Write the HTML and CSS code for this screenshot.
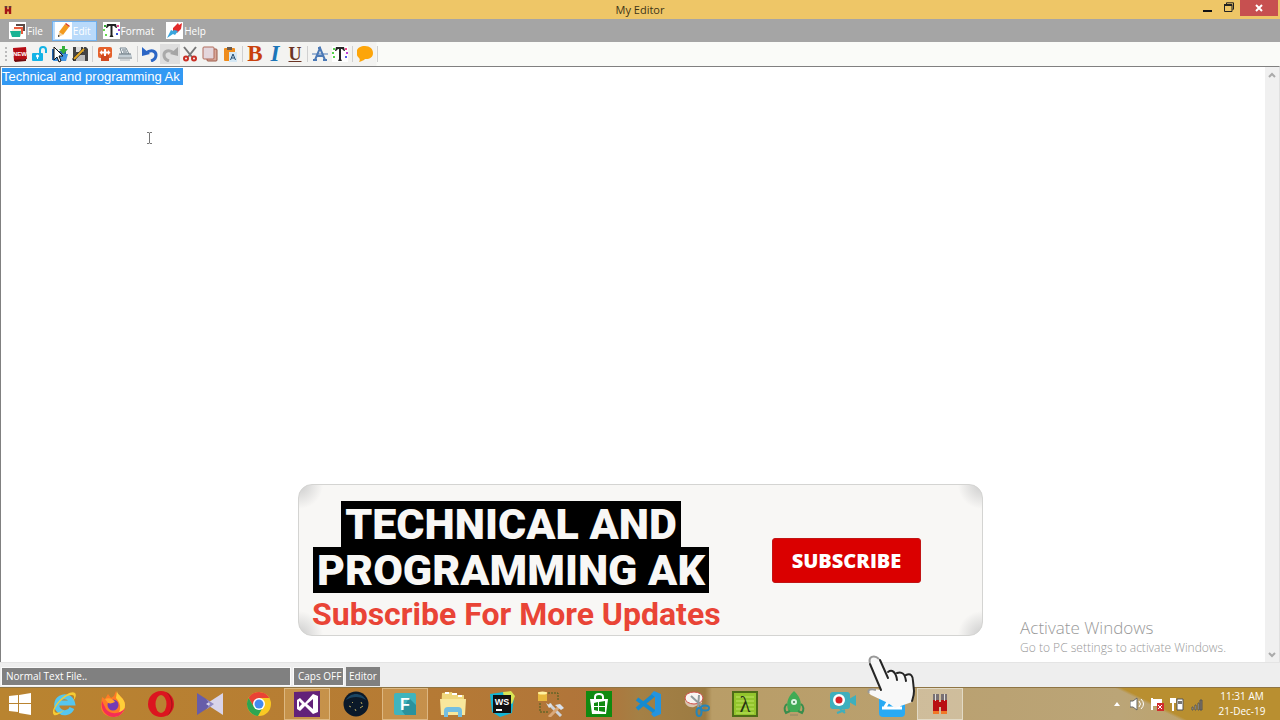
FILE: index.html
```html
<!DOCTYPE html>
<html lang="en">
<head>
  <meta charset="UTF-8" />
  <meta name="viewport" content="width=device-width, initial-scale=1.0"/>
  <title>My Editor</title>
  <link rel="stylesheet" href="styles.css">
</head>
<body>

  <header class="titlebar">
    <svg class="app-icon" viewBox="0 0 10 12"><path d="M1 1h3v4h2V1h3v10H6V8H4v3H1z" fill="#a31515"/><path d="M1 1h3v2H1zM6 1h3v2H6z" fill="#5a4040"/></svg>
    <h1>My Editor</h1>
    <div class="window-buttons">
      <button class="win-btn" aria-label="Minimize"><svg viewBox="0 0 10 10"><path d="M1 8h9v2H1z" fill="#111"/></svg></button>
      <button class="win-btn" aria-label="Restore"><svg viewBox="0 0 10 10"><path d="M2.500 2V.8h7v6.500H8.500" fill="none" stroke="#222"/><path d="M.5 2.500h7.500v7H.5z" fill="none" stroke="#222"/><path d="M0 2h8v2H0z" fill="#222"/></svg></button>
      <button class="win-btn close" aria-label="Close"><svg viewBox="0 0 10 10"><path d="M2 2l6 6M8 2L2 8" stroke="#fff" stroke-width="2"/></svg></button>
    </div>
  </header>

  <nav class="menubar">
    <button class="menu file">
      <svg viewBox="0 0 17 17"><path fill="#fff" d="M0 0h17v17H0z"/><path d="M7 2h9v7H7z" fill="#5b4b48"/><path d="M5 4h9v7H5z" fill="#fff"/><path d="M5 5h9v7H5z" fill="#e95b3c"/><path d="M3 7h9v7H3z" fill="#f7efdc"/><path d="M1 9h11l-1 6H3z" fill="#19b394"/></svg>
      File
    </button>
    <button class="menu edit active">
      <svg viewBox="0 0 17 17"><path fill="#fff" d="M0 0h17v17H0z"/><path d="M4 10l6-8 4 3-6 8z" fill="#f39a1e"/><path d="M10 2l1-1 4 3-1 1z" fill="#d83c26"/><path d="M4 10l4 3-5 2z" fill="#f2cf9c"/><path d="M3 13l2 1-2 1z" fill="#222"/></svg>
      Edit
    </button>
    <button class="menu format">
      <svg viewBox="0 0 17 17"><path fill="#fff" d="M0 0h17v17H0z"/><path d="M4 2h9l1 4h-1l-2-2h-1.500v9l1 2H6.500l1-2V4H6L4 6H3z" fill="#222"/><path d="M1 3h2v2H1z" fill="#3a3"/><path d="M0 7h2v2H0zM2 12h2v2H2z" fill="#63d94d"/><path d="M14 3h2v2h-2z" fill="#f0468a"/><path d="M15 7h2v2h-2z" fill="#a241d8"/><path d="M13 11h2v2h-2z" fill="#3755d6"/></svg>
      Format
    </button>
    <button class="menu help">
      <svg viewBox="0 0 17 17"><path fill="#fff" d="M0 0h17v17H0z"/><path d="M7 6l5-5 1 2 3-2-1 6-4 4-2-2-2 1z" fill="#e22b2b"/><path d="M1 16l4-8 2 1 1-1 4 1-3 4-2-1z" fill="#3aa5dd"/></svg>
      Help
    </button>
  </nav>

  <div class="toolbar">
    <span class="grip"></span>
    <button class="tool" aria-label="New"><svg viewBox="0 0 16 16"><path d="M1 2l13-1 1 12-13 2z" fill="#b50d14"/><path d="M2 14l12-1v2l-11 1z" fill="#6d0a0d"/><text x="8" y="10" class="new-label">NEW</text></svg></button>
    <button class="tool" aria-label="Unlock"><svg viewBox="0 0 16 16"><path d="M8 7V4a3 3 0 016 0v3" fill="none" stroke="#14b3e6" stroke-width="2"/><rect y="7" width="11" height="8" rx="1" fill="#14b3e6"/><circle cx="5.500" cy="10" r="1.500" fill="#fff"/><path d="M5 10h1v3H5z" fill="#fff"/></svg></button>
    <button class="tool" aria-label="Open"><svg viewBox="0 0 16 16"><path d="M0 3h5l1 2h8v9H0z" fill="#2563ac"/><path d="M3 8h13l-2 7H1z" fill="#4495e3"/><path d="M10 0h3v3h3l-4.500 5L7 3h3z" fill="#34af3a"/></svg></button>
    <button class="tool" aria-label="Save"><svg viewBox="0 0 16 16"><path d="M1 1h13l2 2v12H1z" fill="#444"/><path d="M4 1h8v5H4z" fill="#ddd"/><path d="M4 9h9v6H4z" fill="#bbb"/><path d="M9 1h2v4H9z" fill="#444"/><path d="M1 14L12 3" stroke="#222" stroke-width="3"/><path d="M2 13L12 3" stroke="#e5a823" stroke-width="2"/></svg></button>
    <span class="separator"></span>
    <button class="tool" aria-label="Page setup"><svg viewBox="0 0 16 16"><rect x="1" y="1" width="14" height="11" rx="2" fill="#e5622c"/><path d="M4 9h8v6H4z" fill="#d04a20"/><path d="M8 3v7M4 6.500h8" stroke="#fff" stroke-width="2"/><path d="M5 4L2.500 6.500 5 9M11 4l2.500 2.500L11 9" fill="#fff"/></svg></button>
    <button class="tool" aria-label="Print"><svg viewBox="0 0 16 16"><path d="M3 2h6l3 6H5z" fill="#eef3f6" stroke="#7c8b95"/><path d="M2 8h12l1 3H1z" fill="#c3ced5"/><path d="M2 8h12M1 12h14M5 4h4M6 6h4" stroke="#66757e"/><path d="M3 14h10" stroke="#acb4ba"/></svg></button>
    <span class="separator"></span>
    <button class="tool" aria-label="Undo"><svg viewBox="0 0 16 16"><path d="M4 7c5-4 10-2 10 2 0 3-2 5-5 6" fill="none" stroke="#2c66c5" stroke-width="3"/><path d="M0 1l8 7-8 2z" fill="#2c66c5"/></svg></button>
    <button class="tool redo" aria-label="Redo" disabled><svg viewBox="0 0 16 16"><path d="M12 7c-5-4-10-2-10 2 0 3 2 5 5 6" fill="none" stroke="#aaa" stroke-width="3"/><path d="M16 1L8 8l8 2z" fill="#a5a5a5"/></svg></button>
    <button class="tool" aria-label="Cut"><svg viewBox="0 0 16 16"><path d="M2 1l8 10M14 1L6 11" stroke="#777" stroke-width="2"/><circle cx="4" cy="12.500" r="2" fill="none" stroke="#c92f25" stroke-width="2"/><circle cx="12" cy="12.500" r="2" fill="none" stroke="#c92f25" stroke-width="2"/></svg></button>
    <button class="tool" aria-label="Copy"><svg viewBox="0 0 16 16"><rect x="5" y="3" width="10" height="12" rx="1" fill="#d8a89a" stroke="#9d5a49"/><rect x="1" y="1" width="11" height="12" rx="1" fill="#e4d6dc" stroke="#b16b5a"/></svg></button>
    <button class="tool" aria-label="Paste"><svg viewBox="0 0 16 16"><rect x="2" y="2" width="11" height="13" rx="1" fill="#ef8c1c"/><path d="M5 1h5v3H5z" fill="#6b5b4e"/><path d="M7 6h8v10H7z" fill="#d5e8f5"/><path d="M8.500 14l2.500-6 2.500 6M9.500 12h3" fill="none" stroke="#234b70"/></svg></button>
    <span class="separator"></span>
    <button class="tool bold" aria-label="Bold">B</button>
    <button class="tool italic" aria-label="Italic">I</button>
    <button class="tool underline" aria-label="Underline">U</button>
    <span class="separator"></span>
    <button class="tool" aria-label="Strikethrough"><svg viewBox="0 0 16 16"><path d="M3 14L8 2l5 12M5 10h6M1 14h4M11 14h4M6 2h3" fill="none" stroke="#4b79b6" stroke-width="2"/><path d="M0 8h16" stroke="#4b79b6"/></svg></button>
    <button class="tool" aria-label="Font"><svg viewBox="0 0 16 16"><path fill="#fff" d="M0 0h16v16H0z"/><path d="M4 1h8l1 4h-1l-2-2H9v10l1 2H6l1-2V3H6L4 5H3z" fill="#252525"/><path d="M1 2h2v2H1zM0 6h2v2H0zM1 10h2v2H1z" fill="#52d148"/><path d="M13 2h2v2h-2z" fill="#f0468a"/><path d="M14 6h2v2h-2z" fill="#c241d8"/><path d="M13 10h2v2h-2z" fill="#555ee6"/></svg></button>
    <span class="separator"></span>
    <button class="tool" aria-label="Comment"><svg viewBox="0 0 16 16"><path d="M8 0c5 0 8 3 8 7s-3 6-7 6c-2 0-2 2-7 3 1-2 1-3 0-4-4-3-4-12 6-12z" fill="#fda509"/></svg></button>
    <span class="separator last"></span>
  </div>

  <main class="editor">
    <textarea id="text" aria-label="Document text" spellcheck="false">Technical and programming Ak </textarea>
    <div class="scrollbar">
      <button aria-label="Scroll up"><svg viewBox="0 0 8 8"><path d="M1 6l3-3 3 3" fill="none" stroke="#aaa" stroke-width="2"/></svg></button>
      <button aria-label="Scroll down"><svg viewBox="0 0 8 8"><path d="M1 2l3 3 3-3" fill="none" stroke="#aaa" stroke-width="2"/></svg></button>
    </div>
  </main>

  <footer class="statusbar">
    <span class="status message">Normal Text File..</span>
    <span class="status caps">Caps OFF</span>
    <span class="status mode">Editor</span>
  </footer>

  <div class="taskbar">
    <button class="start" aria-label="Start"><svg viewBox="0 0 22 22"><path d="M0 3l9-1v8H0zM10 2l12-2v10H10zM0 11h9v8l-9-1zM10 11h12v11l-12-2z" fill="#fff"/></svg></button>
    <div class="apps">
      <button class="app" aria-label="Internet Explorer"><svg viewBox="0 0 26 26"><path d="M21 17a8 8 0 11.500-5H8" fill="none" stroke="#55c6ef" stroke-width="5"/><path d="M3 24C-3 18 18-3 24 2c2 2 0 6-2 8 2-4 1-6-1-6C14 3 1 18 4 21c2 2 6 0 9-2-3 3-7 6-10 5z" fill="#f6cb32"/></svg></button>
      <button class="app" aria-label="Firefox"><svg viewBox="0 0 26 26"><path d="M2 6l3 2 3-5 3 4 3-2 2-5c1 4 8 6 9 13 1 8-5 13-12 13S0 21 1 14z" fill="#ff7a25"/><path d="M17 0c0 4 8 7 8 14 0 8-6 12-12 12 9-3 9-13 3-19z" fill="#ffce38"/><path d="M2 10c-2 10 5 16 12 16 6 0 10-5 11-9-5 7-17 7-20-1z" fill="#f52e56"/><circle cx="13" cy="14" r="5.500" fill="#743bb5"/><path d="M5 8c5-2 9 1 10 3-3 1-4 2-7 1z" fill="#ffa52c"/></svg></button>
      <button class="app" aria-label="Opera"><svg viewBox="0 0 26 26"><circle cx="13" cy="13" r="13" fill="#dc151f"/><path d="M18 1c7 3 10 17 1 24 6-6 6-18-1-24z" fill="#a9101a"/><ellipse cx="13" cy="13" rx="5.500" ry="9" fill="#b98332"/></svg></button>
      <button class="app" aria-label="KMPlayer"><svg viewBox="0 0 26 26"><path d="M0 2l17 11L0 24z" fill="#675da9"/><path d="M26 2v22L9 13z" fill="#d9d4e9"/><path d="M9 8l8 5-8 6 4-6z" fill="#928ac2"/></svg></button>
      <button class="app" aria-label="Chrome"><svg viewBox="0 0 26 26"><circle cx="13" cy="13" r="12" fill="#f9c923"/><path d="M2.600 7A12 12 0 0123.400 7H13L8 16z" fill="#e94335"/><path d="M2.600 7A12 12 0 0012 25l5-9-9 0z" fill="#2da552"/><circle cx="13" cy="13" r="6" fill="#fff"/><circle cx="13" cy="13" r="4.500" fill="#438af0"/></svg></button>
      <button class="app open" aria-label="Visual Studio"><svg viewBox="0 0 26 26"><path d="M0 1l26-1v26H0z" fill="#632279"/><path d="M3 9l3-2 5 5 8-9 5 2v16l-5 2-8-8-5 5-3-2z" fill="#fff"/><path d="M5 10v6l3-3zM19 8v10l-6-5z" fill="#632279"/></svg></button>
      <button class="app" aria-label="Eclipse"><svg viewBox="0 0 26 26"><circle cx="13" cy="13" r="12.500" fill="#0b1929"/><path d="M3 9c4-8 16-8 20 0-6-4-14-4-20 0z" fill="#1b4562"/><path d="M6 15l2 1M12 18l1 2M17 17l3-2M18 11l1 2M9 11l1 1" stroke="#b6a55d"/></svg></button>
      <button class="app open" aria-label="Filmora"><svg viewBox="0 0 26 26"><rect x="2" y="2" width="22" height="22" rx="2" fill="#40b4bd"/><path d="M17 7l7 7v10H13l-3-4z" fill="#2a929d"/><text x="13" y="19" class="f-label">F</text></svg></button>
      <button class="app" aria-label="File Explorer"><svg viewBox="0 0 26 26"><path d="M2 2l10-1 1 3h11v20H1z" fill="#f0d77c"/><path d="M5 2h4M12 3h5M18 5h4" stroke="#fff" stroke-width="2"/><path d="M0 8h26l-1 16H1z" fill="#f8e79c"/><path d="M4 26v-6q0-4 4-4h10q4 0 4 4v6h-4v-5H8v5z" fill="#74bfe1"/></svg></button>
      <button class="app" aria-label="WebStorm"><svg viewBox="0 0 26 26"><path d="M1 3l14-2 10 6-2 15-12 4-8-5z" fill="#14b5d4"/><path d="M14 1l8-1 4 5-3 8-8-6z" fill="#d9e554"/><path d="M4 4h18v18H4z" fill="#111"/><text x="13" y="14" class="ws-label">WS</text><path d="M7 18h6v2H7z" fill="#fff"/></svg></button>
      <button class="app" aria-label="SQL tools"><svg viewBox="0 0 26 26"><path d="M10 2h10v8M2 12v9h9" fill="none" stroke="#425e20" stroke-dasharray="2 1"/><path d="M0 1h9v9H0z" fill="#e8b83d"/><ellipse cx="4.500" cy="2" rx="4.500" ry="1.500" fill="#fff2a0"/><path d="M11 13l12 12" stroke="#cdd3d9" stroke-width="3"/><path d="M22 15L11 26" stroke="#d9a878" stroke-width="3"/><path d="M17 14l5-1 4 4-3 2z" fill="#d8e1ed"/><path d="M8 12l3 2 2-2 1 3-3 2z" fill="#dce3e9"/></svg></button>
      <button class="app" aria-label="Store"><svg viewBox="0 0 26 26"><path d="M0 0h26v26H0z" fill="#118a10"/><path d="M4 8h18l-2 15H6z" fill="#fff"/><path d="M9 9V6q0-3 4-3t4 3v3" fill="none" stroke="#fff" stroke-width="2"/><path d="M8 12l4-1v4H8zM13 11l6-1v5h-6zM8 16h4v4l-4-1zM13 16h6v5l-6-1z" fill="#118a10"/></svg></button>
      <button class="app" aria-label="Visual Studio Code"><svg viewBox="0 0 26 26"><path d="M2 8L21 22M2 18L20 3" stroke="#168bd0" stroke-width="4"/><path d="M19 0l7 3v20l-7 3-3-3 4-3V6l-4-3z" fill="#2494df"/></svg></button>
      <button class="app" aria-label="Snipping Tool"><svg viewBox="0 0 26 26"><path d="M1 8c-1 6 4 9 9 8l8-4V8z" fill="#d9c3ae"/><ellipse cx="10" cy="7" rx="9" ry="6" fill="#f8f5f2" stroke="#d04c48"/><path d="M7 5l12 11M15 4l-1 13" stroke="#929b9e" stroke-width="2"/><ellipse cx="15" cy="21" rx="2.500" ry="4" fill="none" stroke="#2585b9" stroke-width="2"/><ellipse cx="21" cy="17" rx="4" ry="2.500" fill="none" stroke="#2585b9" stroke-width="2"/></svg></button>
      <button class="app" aria-label="Lambda"><svg viewBox="0 0 26 26"><path d="M1 1h24v24H1z" fill="#93c52d" stroke="#4e6c17" stroke-width="2"/><path d="M4 6h18M4 10h18M4 14h18M4 18h18M4 22h18" stroke="#bee360"/><text x="13" y="21" class="lambda-label">λ</text></svg></button>
      <button class="app" aria-label="Rocket"><svg viewBox="0 0 26 26"><path d="M13 0c8 7 8 15 5 21H8C5 15 5 7 13 0z" fill="#40ab55"/><path d="M6 13c-3 2-3 6-1 9l4-2M20 13c3 2 3 6 1 9l-4-2" fill="none" stroke="#388d4c" stroke-width="2"/><circle cx="13" cy="11" r="3" fill="#d9f3e0"/><circle cx="13" cy="11" r="1" fill="#38794b"/><path d="M9 24h8" stroke="#8f8465"/></svg></button>
      <button class="app" aria-label="Screen recorder"><svg viewBox="0 0 26 26"><rect y="1" width="20" height="17" rx="3" fill="#3eafbd"/><path d="M19 8l7-4v11l-7-4z" fill="#3eafbd"/><path d="M10 18l5 4M7 22l8-3" fill="none" stroke="#3eafbd" stroke-width="2"/><circle cx="9" cy="9" r="6" fill="#fff"/><circle cx="9" cy="9" r="3.500" fill="#d61f26"/></svg></button>
      <button class="app" aria-label="App Store"><svg viewBox="0 0 26 26"><rect width="26" height="26" rx="4" fill="#29aaf3"/><path d="M3 17h20M6 16l6-10M20 16L14 6" stroke="#fff" stroke-width="3"/></svg></button>
      <button class="app open current" aria-label="My Editor"><svg viewBox="0 0 26 26"><path d="M6 3h6v8h2V3h6v20h-6v-7h-2v7H6z" fill="#b90f12"/><path d="M6 3h6v6H6zM14 3h6v6h-6z" fill="#797073"/><path d="M8 3h1v7H8zM17 3h1v7h-1z" fill="#dedede"/><path d="M6 20h6v3H6zM14 20h6v3h-6z" fill="#f17827"/></svg></button>
    </div>
    <div class="tray">
      <button aria-label="Show hidden icons"><svg viewBox="0 0 14 14"><path d="M4 9l3-4 3 4z" fill="#fff"/></svg></button>
      <button aria-label="Volume"><svg viewBox="0 0 14 14"><path d="M0 4h3l4-3v12l-4-3H0z" fill="#fff" stroke="#666"/><path d="M9 4q3 3 0 6M11 2q5 5 0 10" fill="none" stroke="#fff"/></svg></button>
      <button aria-label="Action center"><svg viewBox="0 0 14 14"><path d="M2 1v12" stroke="#fff" stroke-width="2"/><path d="M3 2h9v7H3z" fill="#fff"/><path d="M7 6h7v8H7z" fill="#d12c2c"/><path d="M8 8l4 4M12 8l-4 4" stroke="#fff"/></svg></button>
      <button aria-label="Power"><svg viewBox="0 0 14 14"><path d="M3 5v9M1 1v4h4V1M3 1v5" fill="none" stroke="#fff" stroke-width="2"/><path d="M7 2h6v11H7z" fill="#fff" stroke="#555"/><path d="M8 4h4v3H8z" fill="#777"/></svg></button>
      <button aria-label="Network"><svg viewBox="0 0 14 14"><path d="M2 10h1v3H2zM5 8h1v5H5zM8 6h1v7H8z" fill="#fff" stroke="#555"/><path d="M10 3h2v10h-2z" fill="#85796a" stroke="#555"/></svg></button>
    </div>
    <div class="clock"><span>11:31 AM</span><span>21-Dec-19</span></div>
  </div>

  <section class="banner">
    <div class="channel">
      <h2><span>TECHNICAL AND</span><span>PROGRAMMING AK</span></h2>
      <p>Subscribe For More Updates</p>
    </div>
    <button class="subscribe">SUBSCRIBE</button>
  </section>

  <div class="watermark">
    <p class="watermark-title">Activate Windows</p>
    <p>Go to PC settings to activate Windows.</p>
  </div>

  <svg class="pointer arrow" viewBox="0 0 11 17"><path d="M1 1v13l3-3 2 5 2-1-2-5h4z" fill="#fff" stroke="#111"/></svg>
  <svg class="pointer ibeam" viewBox="0 0 7 12"><path d="M1 .5h2l.5.5.5-.5h2M1 11.500h2l.5-.5.5.5h2M3.500 1v10" fill="none" stroke="#777"/></svg>
  <svg class="pointer hand" viewBox="0 0 52 54"><path d="M5 3c4-4 8-1 10 3l6 12c2-4 7-3 9 1 2-4 7-3 9 1 3-3 7-1 8 3l1 11c1 6-1 9-2 13L29 53l-7-5-17-8c-5-4-2-7 4-6l6 1L4 9c-1-2-1-5 1-6z" fill="#f8f8f8"/><path d="M4 9l11 26M14 5l8 18M22 17c4-3 8 0 9 8M31 18c5-2 8 1 9 8M40 20c5-2 7 1 7 6l1 10c0 5-1 7-2 10" fill="none" stroke="#252525" stroke-width="2" stroke-linecap="round"/><path d="M4 8C2 2 8-1 13 4M3 38c-2-3 2-5 7-3" fill="none" stroke="#999" stroke-width="2"/></svg>

  <script src="script.js"></script>
</body>
</html>
```
FILE: styles.css
```css
* {
  box-sizing: border-box;
}
body {
  display: flex;
  flex-direction: column;
  height: 100vh;
  margin: 0;
  overflow: hidden;
  position: relative;
  font-family: 'Open Sans', 'Noto Sans', sans-serif;
  font-size: 10px;
  background-color: #eeeeee;
}
h1, h2, p {
  margin: 0;
}
button {
  border: 0;
  padding: 0;
  background: none;
  font-family: inherit;
}
svg {
  display: block;
}

/* title bar */
.titlebar {
  display: grid;
  grid-template-columns: 1fr auto 1fr;
  align-items: center;
  height: 19px;
  background-color: #eec667;
}
.app-icon {
  width: 8px;
  height: 10px;
  margin-left: 4px;
}
.titlebar h1 {
  font-size: 11px;
  font-weight: normal;
  line-height: 19px;
  color: #3d3416;
}
.window-buttons {
  display: flex;
  justify-content: flex-end;
  height: 100%;
  padding-right: 2px;
}
.win-btn {
  display: flex;
  justify-content: center;
  width: 22px;
  height: 16px;
  padding-top: 2px;
}
.win-btn svg {
  width: 10px;
  height: 10px;
}
.win-btn.close {
  width: 38px;
  align-items: center;
  padding-top: 0;
  background-color: #c75050;
}

/* menus */
.menubar {
  display: flex;
  align-items: center;
  gap: 3px;
  height: 23px;
  padding-left: 6px;
  background-color: #a5a5a5;
}
.menu {
  display: flex;
  align-items: center;
  gap: 1px;
  height: 20px;
  padding: 0 5px 0 2px;
  border: 1px solid transparent;
  font-size: 10px;
  color: #ffffff;
}
.menu svg {
  width: 17px;
  height: 17px;
}
.menu.active {
  background-color: #b9dafa;
  border-color: #6fb0ee;
}

/* tool buttons */
.toolbar {
  display: flex;
  align-items: center;
  height: 24px;
  padding-left: 5px;
  background: linear-gradient(to right, #f3f3f1 376px, #fafbf8 377px);
}
.grip {
  width: 5px;
  height: 14px;
  border-left: 2px dotted #bbbbbb;
}
.tool {
  display: flex;
  align-items: center;
  justify-content: center;
  width: 20px;
  height: 20px;
}
.tool svg {
  width: 16px;
  height: 16px;
}
.tool.redo {
  background-color: #dedede;
}
.new-label {
  font: bold 6px 'Liberation Sans', sans-serif;
  text-anchor: middle;
  fill: #ffffff;
}
.tool.bold, .tool.italic, .tool.underline {
  font-family: 'Liberation Serif', serif;
  font-size: 23px;
  font-weight: bold;
  line-height: 20px;
}
.tool.bold {
  color: #c9410c;
}
.tool.italic {
  color: #1b75b8;
  font-style: italic;
}
.tool.underline {
  color: #6b3424;
  font-size: 18px;
  text-decoration: underline;
}
.separator {
  width: 5px;
  height: 16px;
  background: linear-gradient(#d0d0d0, #d0d0d0) center / 1px 100% no-repeat;
}

/* text area */
.editor {
  display: flex;
  flex: 1;
  min-height: 0;
  border-top: 1px solid #808080;
  border-left: 1px solid #808080;
  border-right: 1px solid #e0e0e0;
  background-color: #ffffff;
}
.editor textarea {
  flex: 1;
  margin: 0;
  padding: 1px;
  border: 0;
  outline: 0;
  resize: none;
  font-family: 'Liberation Sans', Arial, sans-serif;
  font-size: 13px;
  line-height: 17px;
  color: #222222;
}
.editor textarea::selection {
  background-color: #3399f3;
  color: #ffffff;
}
.scrollbar {
  display: flex;
  flex-direction: column;
  justify-content: space-between;
  width: 14px;
  background-color: #f0f0f0;
}
.scrollbar button {
  display: flex;
  align-items: center;
  justify-content: center;
  height: 15px;
}
.scrollbar svg {
  width: 8px;
  height: 8px;
}

/* status bar */
.statusbar {
  display: flex;
  gap: 2px;
  height: 25px;
  padding: 4px 2px 1px 1px;
  border-top: 1px solid #e4e4e4;
  background-color: #eeeeee;
}
.status {
  padding: 0 4px;
  border: 1px solid #fafafa;
  background-color: #808080;
  color: #ffffff;
  line-height: 17px;
  white-space: nowrap;
}
.status.message {
  width: 290px;
}
.status.caps {
  width: 51px;
}
.status.mode {
  padding: 0 2px;
  border-color: #808080;
}

/* taskbar */
.taskbar {
  display: flex;
  align-items: center;
  height: 33px;
  border-top: 1px solid #8f7544;
  background:
    linear-gradient(26deg, transparent 30%, #b98f30 33%) right / 170px 100% no-repeat,
    linear-gradient(to right, #b98430 0, #b67b34 400px, #b0743a 600px, #a48045 640px, #9c7b42 705px, #b99d67 712px, #baa273 1000px, #bba577 1120px, #c0a160 100%);
}
.start {
  width: 41px;
  padding-left: 9px;
}
.start svg {
  width: 22px;
  height: 22px;
}
.apps {
  display: flex;
  gap: 3px;
  width: 922px;
  height: 100%;
}
.app {
  display: flex;
  flex: 1;
  align-items: center;
  justify-content: center;
  border: 1px solid transparent;
}
.app svg {
  width: 26px;
  height: 26px;
}
.app.open {
  background-color: rgba(255, 225, 160, 0.22);
  border-color: rgba(255, 240, 210, 0.4);
}
.app.current {
  background-color: rgba(255, 255, 255, 0.3);
  border-color: #e2dac5;
}
.f-label {
  font: bold 16px 'Liberation Sans', sans-serif;
  text-anchor: middle;
  fill: #ffffff;
}
.ws-label {
  font: bold 9px 'Liberation Sans', sans-serif;
  text-anchor: middle;
  fill: #ffffff;
}
.lambda-label {
  font: 23px 'Liberation Serif', serif;
  text-anchor: middle;
  fill: #263412;
}
.tray {
  display: flex;
  gap: 6px;
  margin-left: auto;
}
.tray svg {
  width: 14px;
  height: 14px;
}
.clock {
  display: flex;
  flex-direction: column;
  align-items: center;
  width: 76px;
  line-height: 15px;
  color: #ffffff;
}

/* banner over the page */
.banner {
  display: flex;
  align-items: center;
  justify-content: space-between;
  position: absolute;
  left: calc(50% - 342px);
  bottom: 84px;
  width: 685px;
  height: 152px;
  padding: 1px 61px 0 13px;
  border: 1px solid #d4d4d2;
  border-radius: 14px;
  background:
    radial-gradient(circle at top left, #cccccc, transparent 24px),
    radial-gradient(circle at top right, #cccccc, transparent 24px),
    radial-gradient(circle at bottom left, #cccccc, transparent 24px),
    radial-gradient(circle at bottom right, #cccccc, transparent 24px),
    #f8f7f5;
}
.channel {
  padding-top: 14px;
}
.channel h2 {
  display: flex;
  flex-direction: column;
  align-items: center;
  width: 398px;
  font-family: Roboto, sans-serif;
  font-size: 43px;
  font-weight: 900;
  line-height: 46px;
  color: #f8f7f5;
}
.channel h2 span {
  padding: 0 4px;
  background-color: #000000;
  white-space: nowrap;
}
.channel p {
  font-family: Roboto, sans-serif;
  font-size: 32px;
  font-weight: bold;
  line-height: 42px;
  color: #e94436;
}
.subscribe {
  width: 149px;
  height: 45px;
  border: 1px solid #c21414;
  border-radius: 3px;
  background-color: #da0000;
  font-size: 20px;
  font-weight: 800;
  color: #ffffff;
}

.watermark {
  position: absolute;
  right: 54px;
  bottom: 63px;
  font-size: 12px;
  font-weight: 300;
  line-height: 18px;
  color: #999999;
}
.watermark-title {
  font-size: 17px;
  line-height: 22px;
}

/* mouse pointers */
.pointer {
  position: absolute;
  pointer-events: none;
}
.pointer.arrow {
  left: 53px;
  top: 46px;
  width: 11px;
  height: 17px;
}
.pointer.ibeam {
  left: 146px;
  top: 132px;
  width: 7px;
  height: 12px;
}
.pointer.hand {
  left: 866px;
  top: 655px;
  width: 52px;
  height: 54px;
}
```
FILE: script.js
```js
const text = document.getElementById('text');
text.focus();
text.select();
```
